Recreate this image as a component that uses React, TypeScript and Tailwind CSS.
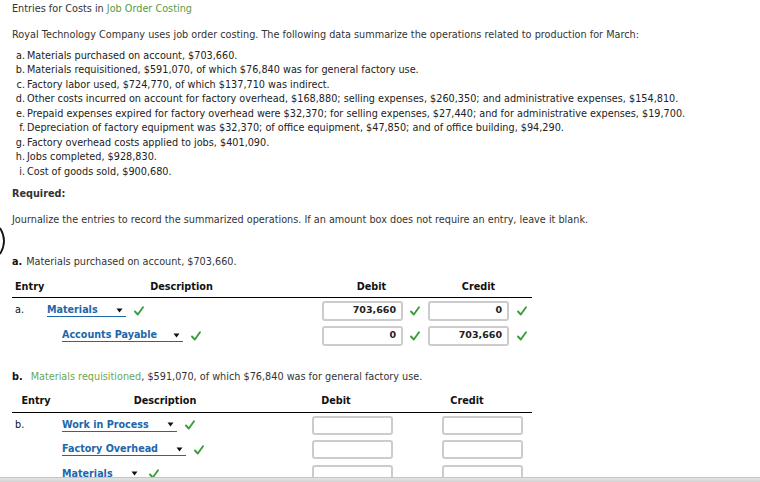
import React from "react";

const font = { fontFamily: "'DejaVu Sans', Verdana, sans-serif" };

function Check() {
  return (
    <svg width="10" height="10" viewBox="0 0 10 10" className="shrink-0">
      <path d="M1 5.5 L3.8 8.5 L9 1.2" fill="none" stroke="#3c9c3c" strokeWidth="1.9" strokeLinecap="round" strokeLinejoin="round" />
    </svg>
  );
}

function Drop({ label, w }: { label: string; w: number }) {
  return (
    <span className="inline-flex items-center h-[13px] border-b border-[#2266aa]" style={{ width: w }}>
      <span className="flex-1 font-bold text-[9.6px] leading-[12px] text-[#2266aa] whitespace-nowrap">{label}</span>
      <svg width="7" height="5" viewBox="0 0 7 5" className="mr-[3px]">
        <path d="M0.5 0.5 L6.5 0.5 L3.5 4.5 Z" fill="#111" />
      </svg>
    </span>
  );
}

function Amount({ v, h = 20 }: { v?: string; h?: number }) {
  return (
    <div
      className="w-[81px] rounded-[3px] border-2 border-[#cccccc] bg-white flex items-center justify-end pr-[5px] text-[9.5px] font-bold text-[#222]"
      style={{ height: h }}
    >
      {v}
    </div>
  );
}

const items: [string, string][] = [
  ["a.", "Materials purchased on account, $703,660."],
  ["b.", "Materials requisitioned, $591,070, of which $76,840 was for general factory use."],
  ["c.", "Factory labor used, $724,770, of which $137,710 was indirect."],
  ["d.", "Other costs incurred on account for factory overhead, $168,880; selling expenses, $260,350; and administrative expenses, $154,810."],
  ["e.", "Prepaid expenses expired for factory overhead were $32,370; for selling expenses, $27,440; and for administrative expenses, $19,700."],
  ["f.", "Depreciation of factory equipment was $32,370; of office equipment, $47,850; and of office building, $94,290."],
  ["g.", "Factory overhead costs applied to jobs, $401,090."],
  ["h.", "Jobs completed, $928,830."],
  ["i.", "Cost of goods sold, $900,680."],
];

export default function App() {
  return (
    <div className="relative w-[760px] h-[482px] overflow-hidden bg-white text-[#333]" style={font}>
      <div className="pl-[12px] pt-[2px] text-[9.7px]">
        <div className="leading-[14px]">
          Entries for Costs in <span className="text-[#5b9a45]">Job Order Costing</span>
        </div>
        <div className="mt-[12px] leading-[14px]">
          Royal Technology Company uses job order costing. The following data summarize the operations related to production for March:
        </div>
        <div className="mt-[7px] text-[#222]">
          {items.map(([m, t]) => (
            <div key={m} className="flex leading-[14.45px] whitespace-nowrap">
              <span className="w-[13px] text-right">{m}</span>
              <span className="pl-[2px]">{t}</span>
            </div>
          ))}
        </div>
        <div className="mt-[8px] leading-[14px] font-bold">Required:</div>
        <div className="mt-[12px] leading-[14px]">
          Journalize the entries to record the summarized operations. If an amount box does not require an entry, leave it blank.
        </div>

        <div className="mt-[28px] leading-[14px]">
          <span className="font-bold text-[#111]">a.</span>
          <span className="ml-[4px]">Materials purchased on account, $703,660.</span>
        </div>

        <div className="mt-[8px] w-[520px]">
          <div className="flex h-[21px] items-center border-b-[1.5px] border-black font-bold text-[#111]">
            <div className="w-[33px] pl-[3px]">Entry</div>
            <div className="w-[273px] text-center">Description</div>
            <div className="w-[107px] text-center">Debit</div>
            <div className="w-[107px] text-center">Credit</div>
          </div>
          {[
            { e: "a.", label: "Materials", w: 79, pl: 2, d: "703,660", c: "0" },
            { e: "", label: "Accounts Payable", w: 121, pl: 17, d: "0", c: "703,660" },
          ].map((r, i) => (
            <div key={i} className="flex h-[25px] items-center">
              <div className="w-[33px] pl-[3px] text-[#111]">{r.e}</div>
              <div className="w-[273px] flex items-center gap-[8px]" style={{ paddingLeft: r.pl }}>
                <Drop label={r.label} w={r.w} />
                <Check />
              </div>
              <div className="w-[107px] flex items-center pl-[4px] gap-[7px]">
                <Amount v={r.d} />
                <Check />
              </div>
              <div className="w-[107px] flex items-center pl-[3px] gap-[8px]">
                <Amount v={r.c} />
                <Check />
              </div>
            </div>
          ))}
        </div>

        <div className="mt-[22px] leading-[14px]">
          <span className="font-bold text-[#111]">b.</span>
          <span className="ml-[8px] text-[#6aa84f]">Materials requisitioned</span>
          <span>, $591,070, of which $76,840 was for general factory use.</span>
        </div>

        <div className="mt-[6px] w-[520px]">
          <div className="flex h-[23px] items-center border-b-[1.5px] border-black font-bold text-[#111]">
            <div className="w-[48px] text-center">Entry</div>
            <div className="w-[210px] text-center">Description</div>
            <div className="w-[132px] text-center">Debit</div>
            <div className="w-[130px] text-center">Credit</div>
          </div>
          {[
            { e: "b.", label: "Work in Process", w: 115 },
            { e: "", label: "Factory Overhead", w: 124 },
            { e: "", label: "Materials", w: 79 },
          ].map((r, i) => (
            <div key={i} className="flex h-[24.5px] items-center">
              <div className="w-[48px] pl-[3px] text-[#111]">{r.e}</div>
              <div className="w-[252px] flex items-center gap-[8px] pl-[2px]">
                <Drop label={r.label} w={r.w} />
                <Check />
              </div>
              <Amount h={19} />
              <div className="w-[49px]" />
              <Amount h={19} />
            </div>
          ))}
        </div>
      </div>

      <svg className="absolute left-0 top-[227px]" width="8" height="28" viewBox="0 0 8 28">
        <path d="M0 1 Q 8 14 0 27" fill="none" stroke="#111" strokeWidth="1.8" />
      </svg>
      <div className="absolute left-0 right-0 bottom-0 h-[5px] border-t border-[#c4c4c4] bg-gradient-to-b from-[#e4e4e4] to-[#d2d2d2]" />
    </div>
  );
}
